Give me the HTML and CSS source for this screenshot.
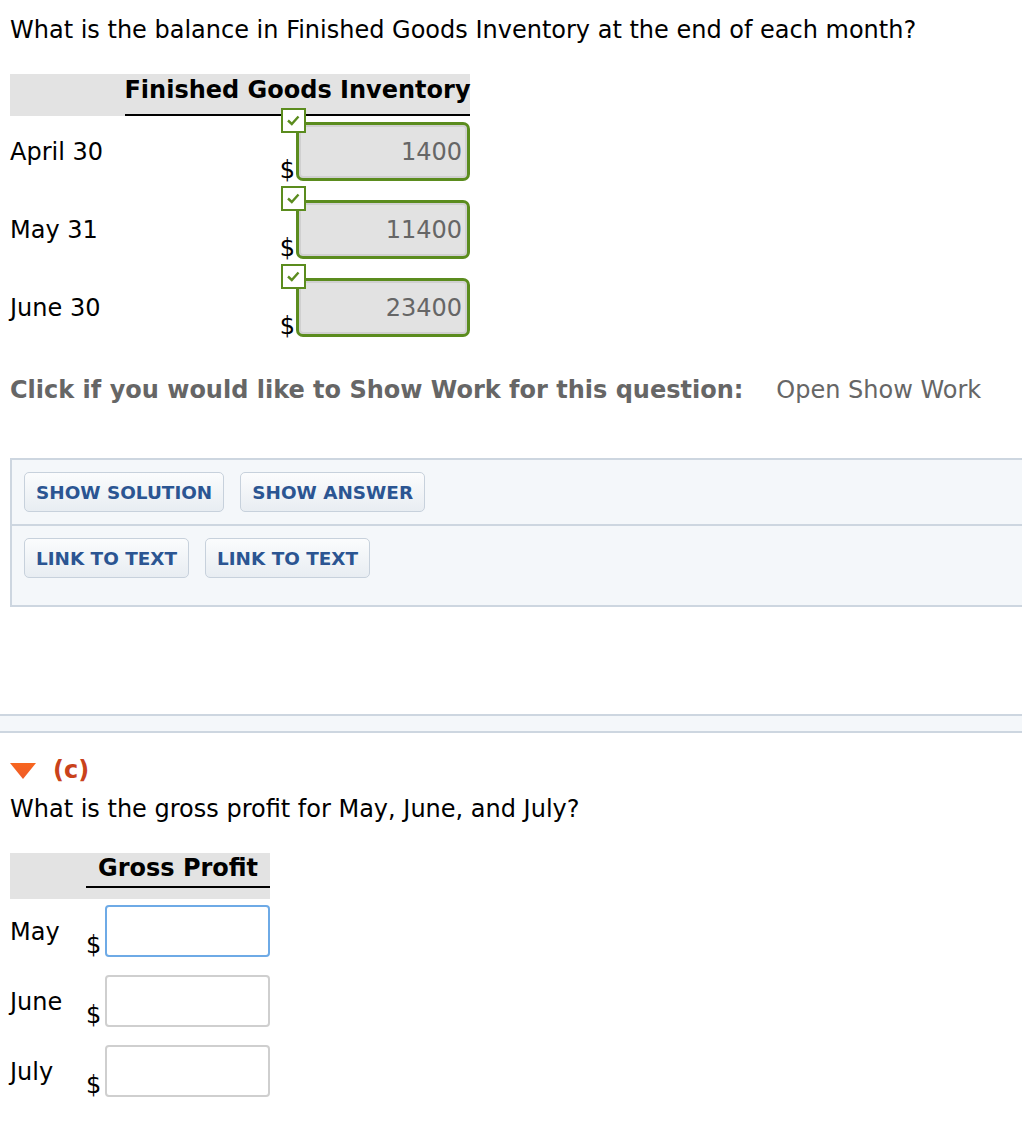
FILE: index.html
```html
<!DOCTYPE html>
<html>
<head>
<meta charset="utf-8">
<link rel="stylesheet" href="styles.css">
</head>
<body>
<div class="page">
  <p class="question q1">What is the balance in Finished Goods Inventory at the end of each month?</p>

  <div class="fgi">
    <div class="hdr-blank"></div>
    <div class="hdr-cell"><span class="hdr-text">Finished Goods Inventory</span></div>

    <div class="lbl">April 30</div>
    <div class="val">
      <span class="check"><svg viewBox="0 0 21 21" width="21" height="21"><path d="M5 10.5 L8.8 14 L15.5 6.5" fill="none" stroke="#5b8c1e" stroke-width="2.4"/></svg></span>
      <span class="dollar">$</span>
      <span class="answer">1400</span>
    </div>

    <div class="lbl">May 31</div>
    <div class="val">
      <span class="check"><svg viewBox="0 0 21 21" width="21" height="21"><path d="M5 10.5 L8.8 14 L15.5 6.5" fill="none" stroke="#5b8c1e" stroke-width="2.4"/></svg></span>
      <span class="dollar">$</span>
      <span class="answer">11400</span>
    </div>

    <div class="lbl">June 30</div>
    <div class="val">
      <span class="check"><svg viewBox="0 0 21 21" width="21" height="21"><path d="M5 10.5 L8.8 14 L15.5 6.5" fill="none" stroke="#5b8c1e" stroke-width="2.4"/></svg></span>
      <span class="dollar">$</span>
      <span class="answer">23400</span>
    </div>
  </div>

  <div class="showwork">
    <span class="sw-label">Click if you would like to Show Work for this question:</span>
    <span class="sw-link">Open Show Work</span>
  </div>

  <div class="solution">
    <div class="sol-row">
      <span class="btn">SHOW SOLUTION</span>
      <span class="btn">SHOW ANSWER</span>
    </div>
    <div class="sol-row last">
      <span class="btn">LINK TO TEXT</span>
      <span class="btn">LINK TO TEXT</span>
    </div>
  </div>

  <div class="band"></div>

  <div class="part">
    <svg class="tri" viewBox="0 0 26 16" width="26" height="16"><defs><linearGradient id="tg" x1="0" y1="0" x2="0" y2="1"><stop offset="0" stop-color="#f7661f"/><stop offset="1" stop-color="#ef5a28"/></linearGradient></defs><path d="M0 0 H26 L13 16 Z" fill="url(#tg)"/></svg>
    <span class="part-label">(c)</span>
  </div>
  <p class="question q2">What is the gross profit for May, June, and July?</p>

  <div class="gp">
    <div class="gp-hdr-blank"></div>
    <div class="gp-hdr-cell"><span class="gp-hdr-text">Gross Profit</span></div>

    <div class="gp-lbl">May</div>
    <div class="gp-val"><span class="dollar2">$</span><span class="entry focus"></span></div>

    <div class="gp-lbl">June</div>
    <div class="gp-val"><span class="dollar2">$</span><span class="entry"></span></div>

    <div class="gp-lbl">July</div>
    <div class="gp-val"><span class="dollar2">$</span><span class="entry"></span></div>
  </div>
</div>
</body>
</html>
```

FILE: styles.css
```css
html, body {
  margin: 0;
  padding: 0;
  background: #fff;
  overflow-x: hidden;
}
body {
  font-family: "DejaVu Sans", Verdana, sans-serif;
  color: #000;
}
.page {
  padding: 0 10px;
}
.question {
  margin: 0;
  font-size: 24px;
  line-height: 28px;
}
.q1 {
  padding-top: 16px;
}

/* Finished goods table */
.fgi {
  display: grid;
  grid-template-columns: 115px 345px;
  margin-top: 30px;
}
.hdr-blank, .hdr-cell {
  background: #e3e3e3;
  height: 42px;
}
.hdr-cell {
  box-sizing: border-box;
  border-bottom: 2px solid #000;
  display: flex;
  justify-content: center;
  align-items: flex-start;
}
.hdr-text {
  font-weight: bold;
  font-size: 24px;
  line-height: 28px;
  padding-top: 2px;
  white-space: nowrap;
}
.lbl {
  height: 78px;
  font-size: 24px;
  line-height: 28px;
  padding-top: 22px;
  box-sizing: border-box;
}
.val {
  position: relative;
  height: 78px;
  display: flex;
  align-items: flex-start;
  justify-content: flex-end;
  padding-top: 6px;
  box-sizing: border-box;
}
.check {
  position: absolute;
  left: 156px;
  top: -8px;
  width: 25px;
  height: 25px;
  box-sizing: border-box;
  border: 2px solid #5b8c1e;
  background: #fff;
  z-index: 2;
  display: flex;
  align-items: center;
  justify-content: center;
}
.check svg {
  display: block;
}
.dollar {
  font-size: 24px;
  line-height: 24px;
  margin-top: 36px;
  margin-right: 1px;
}
.answer {
  box-sizing: border-box;
  width: 174px;
  height: 59px;
  border: 3px solid #5b8c1e;
  border-radius: 7px;
  background: #e2e2e2;
  box-shadow: inset 0 0 0 2px #d0d0d0;
  color: #666;
  font-size: 24px;
  line-height: 54px;
  text-align: right;
  padding: 0 5px 0 0;
}

/* Show work */
.showwork {
  display: flex;
  align-items: center;
  margin-top: 25px;
  height: 30px;
  white-space: nowrap;
}
.sw-label {
  font-weight: bold;
  font-size: 24px;
  color: #666;
}
.sw-link {
  font-size: 24px;
  color: #666;
  margin-left: 33px;
}

/* Solution box */
.solution {
  margin-top: 53px;
  width: calc(100% + 30px);
  border: 2px solid #cdd6e0;
  background: #f4f7fa;
  box-sizing: border-box;
}
.sol-row {
  display: flex;
  gap: 16px;
  padding: 12px 12px;
  height: 64px;
  box-sizing: border-box;
}
.sol-row + .sol-row {
  border-top: 2px solid #cdd6e0;
  height: 81px;
}
.btn {
  display: flex;
  align-items: center;
  height: 40px;
  box-sizing: border-box;
  padding: 0 11px;
  border: 1px solid #c7d1dc;
  border-radius: 5px;
  background: linear-gradient(#fbfcfd, #e8edf2);
  color: #2b5592;
  font-weight: bold;
  font-size: 18.4px;
  white-space: nowrap;
}

/* Separator band */
.band {
  margin: 107px -10px 0;
  height: 15px;
  border-top: 2px solid #cdd6e0;
  border-bottom: 2px solid #cdd6e0;
  background: #f4f7fa;
}

/* Part (c) */
.part {
  display: flex;
  align-items: center;
  margin-top: 23px;
  height: 28px;
}
.tri {
  display: block;
  margin-top: 1px;
}
.part-label {
  margin-left: 17px;
  font-weight: bold;
  font-size: 24px;
  line-height: 28px;
  color: #c9421b;
}
.q2 {
  margin-top: 11px;
}

/* Gross profit table */
.gp {
  display: grid;
  grid-template-columns: 76px 184px;
  margin-top: 30px;
}
.gp-hdr-blank, .gp-hdr-cell {
  background: #e3e3e3;
  height: 46px;
}
.gp-hdr-text {
  display: block;
  height: 35px;
  box-sizing: border-box;
  border-bottom: 2px solid #000;
  text-align: center;
  font-weight: bold;
  font-size: 24px;
  line-height: 28px;
  padding-top: 1px;
  white-space: nowrap;
}
.gp-lbl {
  height: 70px;
  font-size: 24px;
  line-height: 28px;
  padding-top: 19px;
  box-sizing: border-box;
}
.gp-val {
  height: 70px;
  display: flex;
  justify-content: flex-end;
  align-items: flex-start;
  padding-top: 6px;
  box-sizing: border-box;
}
.dollar2 {
  font-size: 24px;
  line-height: 24px;
  margin-top: 28px;
  margin-right: 4px;
}
.entry {
  width: 166px;
  height: 52px;
  box-sizing: border-box;
  border: 2px solid #cfcfcf;
  border-radius: 4px;
  background: #fff;
}
.entry.focus {
  border-color: #6eaae6;
}
```
